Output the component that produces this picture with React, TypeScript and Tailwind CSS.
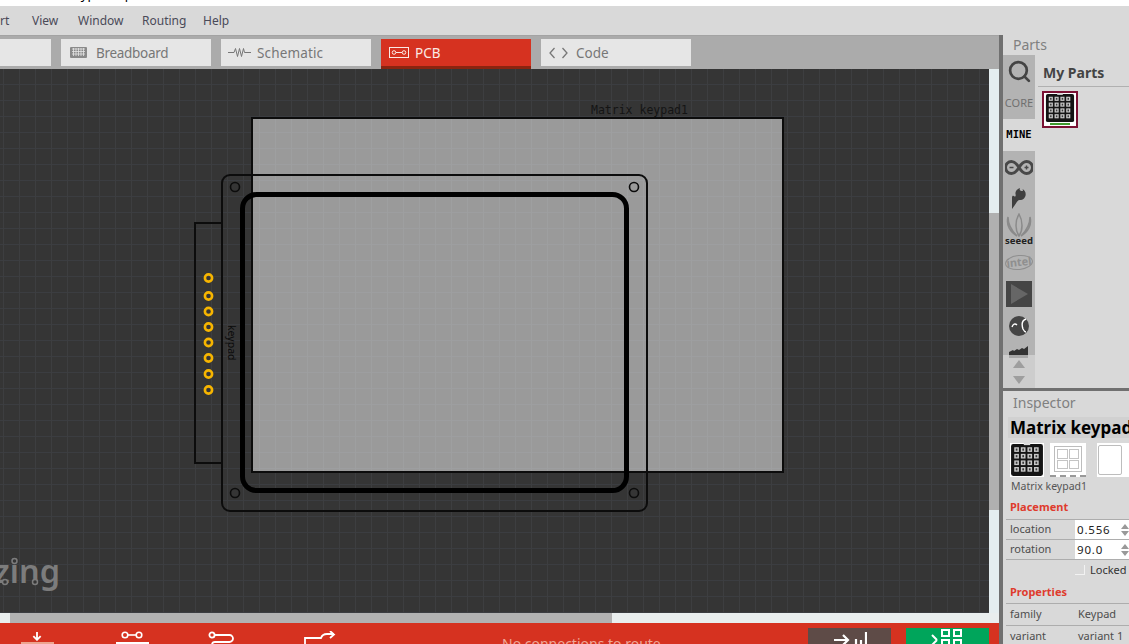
import { Search } from "lucide-react";

const PADS = [278, 296, 311.5, 327, 342.5, 358, 374, 390];
const HOLES = [
  [235, 187],
  [634, 187],
  [235, 493],
  [634, 493],
];

function Keypad({ size }: { size: number }) {
  const keys = Array.from({ length: 16 }, (_, i) => i);
  return (
    <svg width={size} height={size} viewBox="0 0 32 32">
      <rect width="32" height="32" fill="#fff" />
      <rect x="1" y="1" width="30" height="30" rx="2" fill="#141414" />
      <rect x="13" y="0" width="6" height="2" fill="#ddd" />
      {keys.map((k) => (
        <g key={k}>
          <rect x={4 + (k % 4) * 6.2} y={4 + Math.floor(k / 4) * 6.2} width="4.4" height="4.4" fill="#c9c9c9" />
          <rect x={5.4 + (k % 4) * 6.2} y={5.2 + Math.floor(k / 4) * 6.2} width="1.6" height="2" fill="#3a3a3a" />
        </g>
      ))}
    </svg>
  );
}

function Tab({
  label,
  icon,
  active,
  slot,
  text,
}: {
  label: string;
  icon: React.ReactNode;
  active?: boolean;
  slot: string;
  text?: string;
}) {
  return (
    <div
      className={
        active
          ? "flex h-[30px] w-[150px] items-start bg-[#d63220] border-b-[3px] border-[#8a2410] text-[#fbe9e4]"
          : "flex h-[27px] w-[150px] items-start bg-[#e6e6e6] text-[#777777]"
      }
    >
      <div className="flex h-[27px] w-full items-center">
        <div className={"flex shrink-0 justify-center " + slot}>{icon}</div>
        <span className={"pt-[2px] text-[13.5px] " + (text ?? "")}>{label}</span>
      </div>
    </div>
  );
}

function PartnerIcons() {
  return (
    <div className="flex flex-col items-center">
      <div className="flex h-[32px] w-full items-center justify-center bg-[#b3b3b3]">
        <svg width="28" height="17" viewBox="0 0 28 16" fill="none" stroke="#484848" strokeWidth="3">
          <path d="M14 8C11 3 8.500 2 6.500 2a6 6 0 0 0 0 12c2 0 4.500-1 7.500-6Zm0 0c3-5 5.500-6 7.500-6a6 6 0 0 1 0 12c-2 0-4.500-1-7.500-6Z" />
          <path d="M4.500 8h4M19.500 8h4M21.500 6v4" strokeWidth="1.400" />
        </svg>
      </div>
      <div className="flex h-[30px] w-full items-center justify-center">
        <svg width="16" height="21" viewBox="0 0 16 21" fill="#3f3f3f">
          <path d="M1 21V9.500C1 7.500 2.500 7 3.500 8.500 4.500 9 5 7.500 4.500 6 4 3 6.500 1 9 0 8 2 9.500 2.500 10.500 3c2 .500 1.500-1 1-2 3 1.500 4 5 2.500 8-1 2.500-3.500 3-5.500 3C6 12.500 5 16 1 21Z" />
        </svg>
      </div>
      <div className="flex h-[37px] w-full flex-col items-center">
        <svg width="28" height="25" viewBox="0 0 28 23" fill="none" stroke="#8a8a8a" strokeWidth="1.500">
          <path d="M14 22C10 16 10 7 14 0c4 7 4 16 0 22Z" />
          <path d="M12 22C5 18 1 11 3 3c0 8 4 14 9 19ZM16 22c7-4 11-11 9-19 0 8-4 14-9 19Z" />
        </svg>
        <span className="-mt-[2px] text-[9.500px] leading-[9px] font-bold text-[#222222]">seeed</span>
      </div>
      <div className="flex h-[24px] w-full items-center justify-center">
        <div className="flex h-[15px] w-[28px] -rotate-6 items-center justify-center rounded-[50%] border border-[#8f8f8f]">
          <span className="text-[11px] font-bold text-[#8f8f8f]">intel</span>
        </div>
      </div>
      <div className="flex h-[40px] w-full items-center justify-center">
        <div className="flex h-[26px] w-[26px] items-center justify-center bg-[#454545]">
          <svg width="20" height="20" viewBox="0 0 20 20" fill="#666666">
            <path d="M2 0 19 10 2 20Z" />
          </svg>
        </div>
      </div>
      <div className="flex h-[24px] w-full items-center justify-center">
        <svg width="20" height="20" viewBox="0 0 20 20" fill="none">
          <circle cx="10" cy="10" r="10" fill="#454545" />
          <path d="M3 11c1-3 3-4 5-2M17 3c-3 1-5 4-3 10 1 2 2 3 3 3" stroke="#fff" strokeWidth="1.400" />
        </svg>
      </div>
      <div className="flex h-[20px] w-full items-end justify-center overflow-hidden">
        <svg width="20" height="12" viewBox="0 0 20 12" fill="#333333">
          <path d="M0 12V6l4-2 1 1 3-2 2 1 3-2 2 1 4-3v14Z" />
        </svg>
      </div>
    </div>
  );
}

function InspectorRow({ label, value }: { label: string; value: string }) {
  return (
    <div className="flex h-[20px] items-center border-t border-[#adadad]">
      <span className="w-[69px] pl-[4px] text-[11px] text-[#4d4d4d]">{label}</span>
      <div className="flex h-[19px] flex-1 items-center bg-white pl-[2px]">
        <span className="flex-1 text-[11.500px] tracking-[0.8px] text-[#222222]">{value}</span>
        <svg width="8" height="12" viewBox="0 0 8 12" fill="#999999">
          <path d="M4 0 8 5H0ZM0 7h8l-4 5Z" />
        </svg>
      </div>
    </div>
  );
}

export default function App() {
  return (
    <div className="flex h-[644px] w-[1129px] flex-col overflow-hidden bg-white font-['Noto_Sans','Open_Sans',sans-serif]">
      {/* title bar, only the descenders are left in the shot */}
      <div className="h-[6px] shrink-0 overflow-hidden bg-white">
        <div className="-mt-[14px] pl-[24px] text-[13px] leading-[16px] text-black">Matrix keypad.fzpz</div>
      </div>

      <div className="flex h-[29px] shrink-0 items-center bg-[#d9d9d9] text-[12px] text-[#4a4a58]">
        <span className="-ml-[14px] w-[46px]">Part</span>
        <span className="w-[46px]">View</span>
        <span className="w-[64px]">Window</span>
        <span className="w-[61px]">Routing</span>
        <span>Help</span>
      </div>

      <div className="flex min-h-0 flex-1">
        <div className="flex w-[999px] flex-col">
          <div className="flex h-[34px] shrink-0 gap-[10px] border-t border-[#a3a3a3] bg-[#ababab] pt-[3px]">
            <div className="h-[27px] w-[51px] bg-[#e6e6e6]" />
            <Tab
              label="Breadboard"
              slot="w-[35px]"
              text="tracking-[-0.3px]"
              icon={
                <svg width="17" height="11" viewBox="0 0 17 11" fill="#8a8a8a">
                  <rect width="17" height="11" rx="1" />
                  <path d="M2 2h13M2 4.500h13M2 7h13M3.500 1v8M6 1v8M8.500 1v8M11 1v8M13.500 1v8" stroke="#e6e6e6" strokeWidth=".8" />
                </svg>
              }
            />
            <Tab
              label="Schematic"
              slot="w-[36px]"
              text="tracking-[0.15px]"
              icon={
                <svg width="23" height="9" viewBox="0 0 23 9" fill="none" stroke="#777777">
                  <path d="M0 4.500h6l1.500-4 2 8 2-8 2 8 2-8 1 4h6.500" />
                </svg>
              }
            />
            <Tab
              active
              label="PCB"
              slot="w-[34px]"
              icon={
                <svg width="20" height="11" viewBox="0 0 20 11" fill="none" stroke="#fbe9e4" className="ml-[2px]">
                  <rect x=".5" y=".5" width="19" height="10" />
                  <circle cx="5" cy="5.500" r="1.800" />
                  <circle cx="15" cy="5.500" r="1.800" />
                  <path d="M7 5.500h6" />
                </svg>
              }
            />
            <Tab
              label="Code"
              slot="w-[35px]"
              icon={
                <svg width="19" height="12" viewBox="0 0 19 12" fill="none" stroke="#777777" strokeWidth="1.300">
                  <path d="M5.500 1 1 6l4.500 5M13.500 1 18 6l-4.500 5" />
                </svg>
              }
            />
          </div>

          <div className="flex min-h-0 flex-1">
            <div className="relative w-[989px] bg-[#353535] bg-[linear-gradient(to_right,#3d3e40_1px,transparent_1px),linear-gradient(to_bottom,#3b3d41_1px,transparent_1px)] bg-[size:16px_16px] bg-[position:3px_15px]">
              <svg className="absolute inset-0" width="989" height="544" viewBox="0 69 989 544" fill="none">
                <text x="591" y="114" fontFamily="DejaVu Sans Mono" fontSize="11.500" fill="#141414">
                  Matrix keypad1
                </text>
                <rect x="252" y="118" width="531" height="354" fill="#ffffff" fillOpacity=".5" stroke="#0c0c0c" strokeWidth="2" />
                <rect x="195" y="223" width="27" height="240" stroke="#0c0c0c" strokeWidth="2" />
                <rect x="222" y="175" width="425" height="336" rx="8" stroke="#0c0c0c" strokeWidth="2" />
                <rect x="242.500" y="194.500" width="384" height="296" rx="14" stroke="#000" strokeWidth="5" />
                {HOLES.map(([cx, cy]) => (
                  <circle key={cx + "-" + cy} cx={cx} cy={cy} r="4.500" stroke="#0c0c0c" strokeWidth="1.600" />
                ))}
                {PADS.map((cy) => (
                  <circle key={cy} cx="208.500" cy={cy} r="3.600" stroke="#f7b500" strokeWidth="2.600" />
                ))}
                <text transform="translate(228 325) rotate(90)" fontFamily="Noto Sans" fontSize="10.500" fill="#0a0a0a">
                  keypad
                </text>
                <text x="-6" y="583" fontFamily="Noto Sans" fontWeight="600" fontSize="33" fill="#7c7c7c" textLength="66" lengthAdjust="spacingAndGlyphs">
                  zing
                </text>
                <g fill="#353535" stroke="#7c7c7c" strokeWidth="1.500">
                  <circle cx="14.500" cy="561" r="2.500" />
                  <circle cx="5" cy="582" r="2.500" />
                  <circle cx="35" cy="582" r="2.500" />
                </g>
              </svg>
            </div>
            <div className="flex w-[10px] flex-col bg-[#e5eef0]">
              <div className="h-[144px] shrink-0" />
              <div className="h-[297px] shrink-0 bg-[#b0b0b0]" />
            </div>
          </div>

          <div className="flex h-[10px] shrink-0 bg-[#e9eeee]">
            <div className="w-[10px]" />
            <div className="w-[602px] bg-[#b2b2b2]" />
          </div>

          <div className="relative h-[21px] shrink-0 overflow-hidden bg-[#d63220] text-white">
            <div className="flex h-full">
              <div className="flex w-[74px] flex-col items-center">
                <svg width="14" height="10" viewBox="0 0 14 10" fill="none" stroke="#fff" strokeWidth="2" className="mt-[9px]">
                  <path d="M7 0v8M3 4.500 7 8.500l4-4" />
                </svg>
                <div className="mt-px h-[2px] w-[33px] bg-[#eda48f]" />
              </div>
              <div className="flex w-[116px] flex-col items-center">
                <svg width="22" height="8" viewBox="0 0 22 8" fill="none" stroke="#fff" strokeWidth="1.600" className="mt-[8px]">
                  <circle cx="4" cy="4" r="2.800" />
                  <circle cx="18" cy="4" r="2.800" />
                  <path d="M7 4h8" />
                </svg>
                <div className="mt-[3px] h-[2px] w-[33px] bg-white" />
              </div>
              <div className="flex w-[62px] justify-center">
                <svg width="26" height="14" viewBox="0 0 26 14" fill="none" stroke="#fff" strokeWidth="1.800" className="mt-[8px]">
                  <circle cx="4" cy="4" r="2.600" />
                  <path d="M7 4h14.500a3.500 3.500 0 0 1 0 7H7a3 3 0 0 0-3 3" />
                </svg>
              </div>
              <div className="flex w-[136px] justify-center">
                <svg width="32" height="16" viewBox="0 0 32 16" fill="none" stroke="#fff" strokeWidth="1.800" className="mt-[8px]">
                  <path d="M1 16V7h16c1-3 3-4 6-4h7M26 0l4 3.500-4 3.500" />
                </svg>
              </div>
              <span className="ml-[114px] pt-[13px] text-[14px] leading-[16px] text-[#f0a898]">No connections to route</span>
            </div>
            <div className="absolute top-[5px] left-[808px] flex h-[16px] w-[83px] justify-center bg-[#5e4b47]">
              <svg width="34" height="14" viewBox="0 0 34 14" fill="none" stroke="#fff" strokeWidth="2.200" className="mt-[4px]">
                <path d="M1 8h14M10 3l5 5-5 5M23 14V7M28 14V8M33 14V0" />
              </svg>
            </div>
            <div className="absolute top-[5px] left-[906px] flex h-[16px] w-[83px] justify-center bg-[#00a55b]">
              <svg width="34" height="16" viewBox="0 0 34 16" fill="none" stroke="#fff" strokeWidth="2" className="mt-[1px]">
                <path d="M1 6l5 5M6 11l-5 5" />
                <rect x="11" y="1" width="7" height="6" />
                <rect x="23" y="1" width="7" height="6" />
                <rect x="11" y="11" width="7" height="6" />
                <rect x="23" y="11" width="7" height="6" />
              </svg>
            </div>
          </div>
        </div>

        <div className="w-[4px] shrink-0 bg-[#707070]" />

        <div className="flex w-[126px] shrink-0 flex-col bg-[#d9d9d9]">
          <div className="flex h-[20px] shrink-0 items-center pb-[2px] pl-[10px] text-[14px] text-[#808080]">Parts</div>
          <div className="relative flex h-[333px] shrink-0 overflow-hidden">
            <div className="w-[32px] shrink-0 bg-[#b3b3b3]">
              <div className="flex h-[32px] items-center justify-center">
                <Search size={25} strokeWidth={2.600} color="#444444" />
              </div>
              <div className="flex h-[32px] items-center justify-center text-[11px] text-[#707070]">CORE</div>
              <div className="flex h-[32px] items-center justify-center bg-[#d9d9d9] font-['DejaVu_Sans_Mono',monospace] text-[10.500px] font-bold text-black">
                MINE
              </div>
              <PartnerIcons />
            </div>
            <div className="flex-1 pl-[3px]">
              <div className="flex h-[32px] items-center border-b border-[#b0b0b0] pt-[4px] pl-[5px] text-[14px] font-bold text-[#444444]">
                My Parts
              </div>
              <div className="mt-[4px] ml-[4px] flex h-[37px] w-[36px] flex-col items-center border-2 border-[#7a1133] bg-white">
                <Keypad size={30} />
                <div className="h-[2px] w-[20px] bg-[#3f9a2e]" />
              </div>
            </div>
            <div className="absolute bottom-0 left-0 flex h-[33px] w-[32px] flex-col items-center gap-[8px] bg-[#d9d9d9]/70 pt-[5px]">
              <div className="h-0 w-0 border-x-[6.500px] border-b-[8px] border-x-transparent border-b-[#9e9e9e]" />
              <div className="h-0 w-0 border-x-[6.500px] border-t-[8px] border-x-transparent border-t-[#9e9e9e]" />
            </div>
          </div>

          <div className="h-[3px] shrink-0 bg-[#707070]" />

          <div className="flex min-h-0 flex-1 flex-col overflow-hidden">
            <div className="mb-[4px] flex h-[22px] shrink-0 items-center pl-[10px] text-[14px] text-[#808080]">Inspector</div>
            <div className="ml-[5px] h-[21px] shrink-0 overflow-hidden bg-[#d1d1d1] pl-[2px] text-[17px] leading-[21px] font-bold whitespace-nowrap text-black">
              Matrix keypad1
            </div>
            <div className="mt-[5px] flex h-[34px] shrink-0 gap-[6px] pl-[7px]">
              <Keypad size={34} />
              <div className="flex h-[34px] w-[36px] items-center justify-center border-b-2 border-dashed border-[#999999] bg-white">
                <div className="grid h-[26px] w-[28px] grid-cols-2 gap-px border border-[#bdbdbd] p-[2px]">
                  <div className="border border-[#c4c4c4]" />
                  <div className="border border-[#c4c4c4]" />
                  <div className="border border-[#c4c4c4]" />
                  <div className="border border-[#c4c4c4]" />
                </div>
              </div>
              <div className="ml-[5px] flex h-[34px] w-[32px] items-center bg-white pl-px">
                <div className="h-[30px] w-[24px] rounded-[2px] border border-[#bdbdbd]" />
              </div>
            </div>
            <div className="mt-px h-[16px] shrink-0 pl-[8px] text-[10.500px] leading-[16px] whitespace-nowrap text-[#555555]">
              Matrix keypad1
            </div>
            <div className="h-[25px] shrink-0 pt-[3px] pl-[7px] text-[11px] leading-[20px] font-bold text-[#df3b2d]">Placement</div>
            <div className="ml-[3px]">
              <InspectorRow label="location" value="0.556" />
              <InspectorRow label="rotation" value="90.0" />
              <div className="flex h-[21px] items-center border-t border-[#adadad] pl-[69px]">
                <div className="h-[10px] w-[10px] border-r border-b border-[#f2f2f2]" />
                <span className="ml-[5px] text-[11px] text-[#333333]">Locked</span>
              </div>
              <div className="h-[23px] pt-[1px] pl-[4px] text-[11px] leading-[22px] font-bold text-[#df3b2d]">Properties</div>
              <div className="flex h-[22px] items-center border-t border-[#adadad] pl-[4px] text-[11px] text-[#4d4d4d]">
                <span className="w-[68px]">family</span>
                <span>Keypad</span>
              </div>
              <div className="flex h-[22px] items-center border-t border-[#adadad] pl-[4px] text-[11px] text-[#4d4d4d]">
                <span className="w-[68px]">variant</span>
                <span>variant 1</span>
              </div>
            </div>
          </div>
        </div>
      </div>
    </div>
  );
}
